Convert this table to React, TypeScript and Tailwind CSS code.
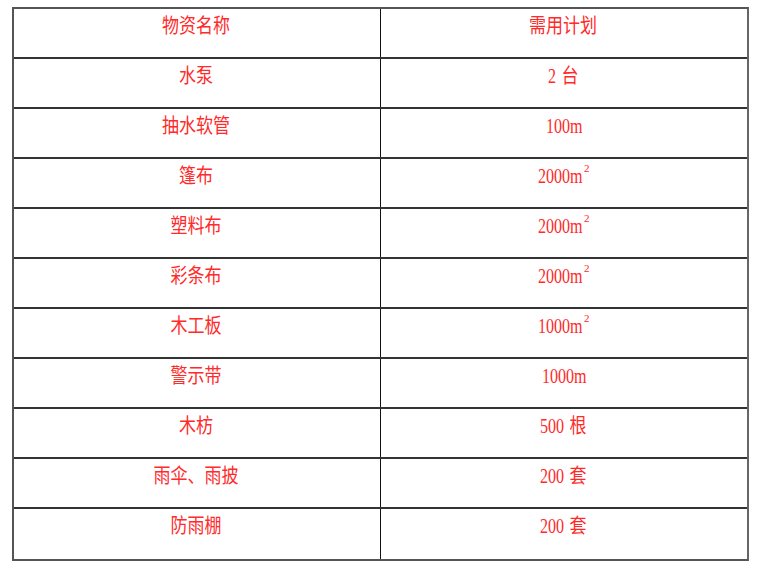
import React from 'react';

const rows: { name: string; num: string; unit?: string; m?: boolean; sq?: boolean }[] = [
  { name: '水泵', num: '2', unit: '台' },
  { name: '抽水软管', num: '100', m: true },
  { name: '篷布', num: '2000', m: true, sq: true },
  { name: '塑料布', num: '2000', m: true, sq: true },
  { name: '彩条布', num: '2000', m: true, sq: true },
  { name: '木工板', num: '1000', m: true, sq: true },
  { name: '警示带', num: '1000', m: true },
  { name: '木枋', num: '500', unit: '根' },
  { name: '雨伞、雨披', num: '200', unit: '套' },
  { name: '防雨棚', num: '200', unit: '套' },
];

const font = { fontFamily: '"Liberation Serif", "Noto Sans CJK SC", serif' };

function Cell({ children, right }: { children: React.ReactNode; right?: boolean }) {
  return (
    <div className={`flex justify-center pt-[5px] ${right ? '' : 'border-r border-[#111]'}`}>
      <span className="inline-flex items-start text-[20px] leading-[24px] text-[#ff2a2a] whitespace-nowrap">
        {children}
      </span>
    </div>
  );
}

function Cjk({ children }: { children: React.ReactNode }) {
  return <span className="inline-block w-max origin-top scale-x-[0.85] -mx-[1.5%]">{children}</span>;
}

// digits are 0.5em, "m" 0.778em in Liberation Serif; squeeze to 73%
function Num({ text }: { text: string }) {
  const em = [...text].reduce((s, c) => s + (c === 'm' ? 0.778 : 0.5), 0);
  const w = em * 22 * 0.73;
  return (
    <span className="inline-block overflow-visible" style={{ width: w }}>
      <span className="inline-block text-[22px] leading-[24px] scale-x-[0.73] origin-left">{text}</span>
    </span>
  );
}

export default function App() {
  return (
    <div className="w-[760px] h-[570px] bg-white pt-[7px] pl-[12px]" style={font}>
      <div className="w-[737px] border-2 border-[#555] border-r-[#666]">
        <div className="grid grid-cols-[367px_1fr] h-[50px] border-b-2 border-[#333]">
          <Cell><Cjk>物资名称</Cjk></Cell>
          <Cell right><Cjk>需用计划</Cjk></Cell>
        </div>
        {rows.map((r, i) => (
          <div
            key={r.name}
            className={`grid grid-cols-[367px_1fr] h-[50px] ${i < rows.length - 1 ? 'border-b-2 border-[#333]' : ''}`}
          >
            <Cell><Cjk>{r.name}</Cjk></Cell>
            <Cell right>
              <Num text={r.num + (r.m ? 'm' : '')} />
              {r.sq && <span className="text-[11px] leading-[11px] ml-[1px] mt-[-1px]">2</span>}
              {r.unit && <span className="ml-[4px]"><Cjk>{r.unit}</Cjk></span>}
            </Cell>
          </div>
        ))}
      </div>
    </div>
  );
}
